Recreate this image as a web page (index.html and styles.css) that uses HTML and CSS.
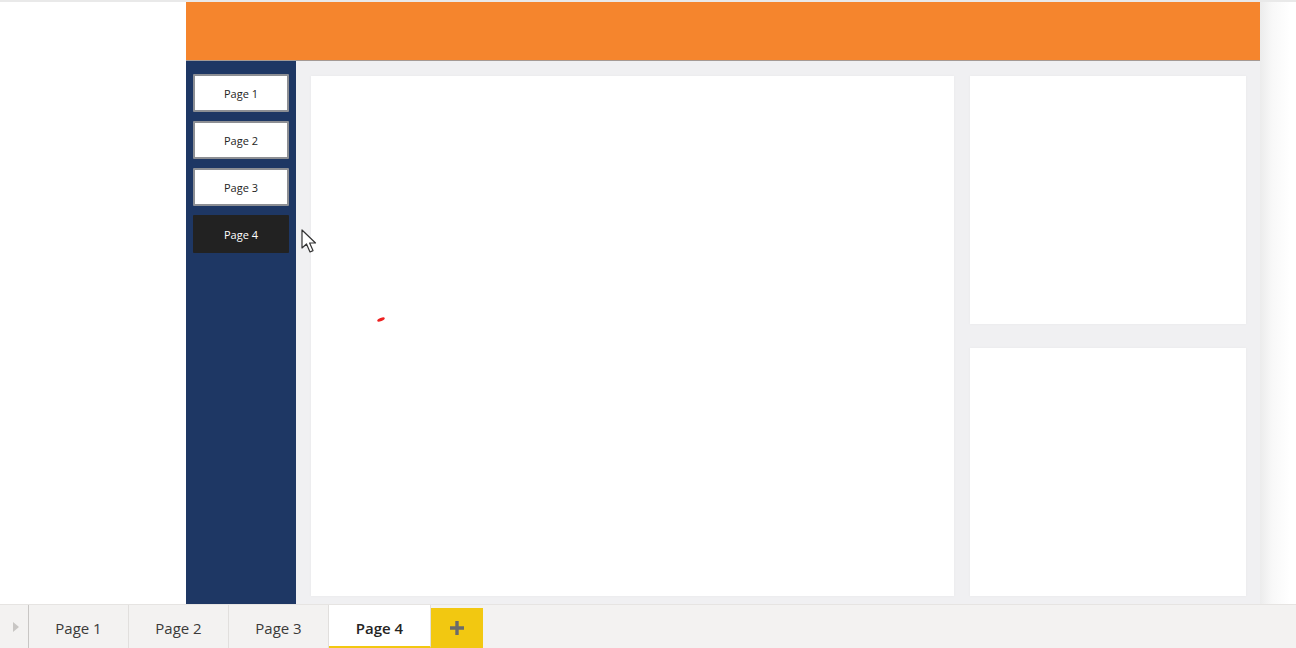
FILE: index.html
```html
<!DOCTYPE html>
<html lang="en">
<head>
  <meta charset="UTF-8">
  <title>Report Pages</title>
  <link rel="stylesheet" href="styles.css">
</head>
<body>

  <div class="topline"></div>

  <div class="stage">
    <div class="gutter"></div>

    <div class="canvas">
      <div class="header"></div>
      <div class="report">
        <div class="sidebar">
          <button class="nav-btn">Page 1</button>
          <button class="nav-btn">Page 2</button>
          <button class="nav-btn">Page 3</button>
          <button class="nav-btn active">Page 4</button>
        </div>
        <div class="main">
          <div class="panel big">
            <span class="mark"></span>
          </div>
          <div class="side-panels">
            <div class="panel"></div>
            <div class="panel"></div>
          </div>
          <svg class="cursor" width="18" height="26" viewBox="0 0 18 26">
            <path d="M1 1 L1 19 L5.5 15 L9 23 L12 21.6 L8.6 14 L14.5 14 Z" fill="#fff" stroke="#333" stroke-width="1.2" stroke-linejoin="round"/>
          </svg>
        </div>
      </div>
    </div>

    <div class="outside"></div>
  </div>

  <div class="tabbar">
    <div class="tab-arrow">
      <svg width="8" height="12" viewBox="0 0 8 12"><path d="M1 1 L7 6 L1 11 Z" fill="#c8c6c4"/></svg>
    </div>
    <div class="tab">Page 1</div>
    <div class="tab">Page 2</div>
    <div class="tab">Page 3</div>
    <div class="tab current">Page 4</div>
    <div class="tab-add">
      <svg width="16" height="16" viewBox="0 0 16 16"><path d="M8 1 V15 M1 8 H15" stroke="#6b6b6b" stroke-width="3.4"/></svg>
    </div>
  </div>

</body>
</html>
```

FILE: styles.css
```css
* {
  box-sizing: border-box;
}

body {
  margin: 0;
  font-family: "Open Sans", "Noto Sans", sans-serif;
  background: #ffffff;
  width: 1296px;
  height: 648px;
  overflow: hidden;
}

.topline {
  height: 2px;
  background: #e9e9e9;
}

.stage {
  display: flex;
  height: 602px;
}

.gutter {
  width: 186px;
  background: #ffffff;
}

.canvas {
  width: 1074px;
  display: flex;
  flex-direction: column;
}

.outside {
  flex: 1;
  background: linear-gradient(90deg, #ececec, #f8f8f8 12px, #ffffff 30px);
}

.header {
  height: 59px;
  background: #f5852d;
  border-bottom: 1px solid #a59a94;
}

.report {
  flex: 1;
  display: flex;
}

.sidebar {
  width: 110px;
  background: #1e3764;
  padding: 13px 7px;
  display: flex;
  flex-direction: column;
  gap: 9px;
}

.nav-btn {
  height: 38px;
  width: 96px;
  background: #ffffff;
  border: 2px solid #8d8f94;
  border-radius: 1px;
  font-family: "Open Sans", sans-serif;
  font-size: 11px;
  color: #252423;
  padding: 0;
}

.nav-btn.active {
  background: #222222;
  border-color: #222222;
  color: #ffffff;
}

.main {
  flex: 1;
  position: relative;
  background: #f0f0f2;
  padding: 15px 14px 8px 15px;
  display: flex;
  gap: 16px;
}

.panel {
  background: #ffffff;
  box-shadow: 0 0 3px rgba(0,0,0,0.04);
}

.panel.big {
  width: 643px;
  position: relative;
}

.side-panels {
  flex: 1;
  display: flex;
  flex-direction: column;
  gap: 24px;
}

.side-panels .panel {
  flex: 1;
}

.mark {
  position: absolute;
  left: 66px;
  top: 242px;
  width: 8px;
  height: 3px;
  border-radius: 50%;
  background: #ee2020;
  transform: rotate(-22deg);
}

.cursor {
  position: absolute;
  left: 5px;
  top: 168px;
}

.tabbar {
  height: 44px;
  background: #f3f2f1;
  border-top: 1px solid #e6e4e2;
  display: flex;
  align-items: stretch;
}

.tab-arrow {
  width: 29px;
  display: flex;
  align-items: center;
  justify-content: center;
  padding-left: 3px;
  border-right: 1px solid #c8c6c4;
}

.tab {
  width: 100px;
  display: flex;
  align-items: center;
  justify-content: center;
  font-size: 15px;
  color: #3b3a39;
  border-right: 1px solid #e1dfdd;
  padding-top: 3px;
}

.tab.current {
  width: 102px;
  background: #ffffff;
  color: #252423;
  font-weight: 600;
  border-bottom: 2px solid #f2c811;
  padding-top: 4px;
}

.tab-add {
  width: 52px;
  background: #f2c811;
  display: flex;
  align-items: center;
  justify-content: center;
  margin-top: 3px;
}
```
